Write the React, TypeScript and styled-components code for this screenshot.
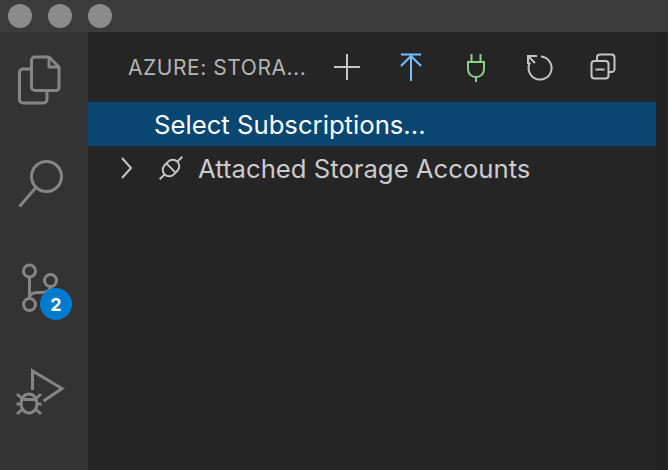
import React from "react";
import styled, { createGlobalStyle } from "styled-components";

const GlobalStyle = createGlobalStyle`
  html, body {
    margin: 0;
    padding: 0;
    background: #252526;
  }
`;

const Window = styled.div`
  width: 668px;
  height: 470px;
  display: flex;
  flex-direction: column;
  overflow: hidden;
  font-family: Inter, "Liberation Sans", sans-serif;
`;

const TitleBar = styled.div`
  height: 32px;
  flex: none;
  display: flex;
  align-items: center;
  gap: 16px;
  padding-left: 8px;
  background: #3c3c3c;
`;

const TrafficLight = styled.span`
  width: 24px;
  height: 24px;
  border-radius: 50%;
  background: #8b8b8b;
`;

const Body = styled.div`
  flex: 1;
  display: flex;
  min-height: 0;
`;

const ActivityBar = styled.div`
  width: 88px;
  flex: none;
  display: flex;
  flex-direction: column;
  background: #333333;
`;

const ActivityItem = styled.div`
  position: relative;
  height: 108px;
  flex: none;
  svg {
    display: block;
  }
`;

const Badge = styled.span`
  position: absolute;
  left: 40px;
  top: 40px;
  width: 32px;
  height: 32px;
  border-radius: 50%;
  background: #007acc;
  color: #fff;
  font-size: 18px;
  font-weight: 700;
  display: flex;
  align-items: center;
  justify-content: center;
`;

const SideBar = styled.div`
  flex: 1;
  display: flex;
  flex-direction: column;
  background: #252526;
`;

const Gutter = styled.div`
  width: 10px;
  flex: none;
  background: #222223;
  border-right: 2px solid #252526;
`;

const Header = styled.div`
  height: 70px;
  flex: none;
  display: flex;
  align-items: center;
  padding-left: 40px;
`;

const HeaderTitle = styled.div`
  width: 199px;
  flex: none;
  font-size: 21px;
  letter-spacing: 0.55px;
  color: #b4b4b4;
  white-space: nowrap;
`;

const Actions = styled.div`
  display: flex;
  align-items: center;
  gap: 24px;
  svg {
    display: block;
    flex: none;
  }
`;

const Row = styled.div<{ $selected?: boolean }>`
  height: 44px;
  flex: none;
  display: flex;
  align-items: center;
  font-size: 25.7px;
  white-space: nowrap;
  background: ${({ $selected }) => ($selected ? "#094771" : "transparent")};
  color: ${({ $selected }) => ($selected ? "#ffffff" : "#cccccc")};
`;

const SelectLabel = styled.span`
  padding-left: 66px;
`;

const TreeIcons = styled.span`
  display: flex;
  align-items: center;
  padding-left: 31px;
  gap: 23px;
  margin-right: 14px;
  svg {
    display: block;
    flex: none;
  }
`;

const gray = "#858585";

export default function App(): JSX.Element {
  return (
    <>
      <GlobalStyle />
      <Window>
        <TitleBar>
          <TrafficLight />
          <TrafficLight />
          <TrafficLight />
        </TitleBar>
        <Body>
          <ActivityBar>
            <ActivityItem>
              <svg width="88" height="108" viewBox="0 32 88 108" fill="none" stroke={gray} strokeWidth="3" strokeLinejoin="round">
                <path d="M31 69H23a3.500 3.500 0 0 0-3.500 3.500V99.500a3.500 3.500 0 0 0 3.500 3.500H43.500a3.500 3.500 0 0 0 3.500-3.500V91" />
                <path d="M35 57H49L59 67V87.500a3 3 0 0 1-3 3H35a3.500 3.500 0 0 1-3.500-3.500V60.500a3.500 3.500 0 0 1 3.500-3.500Z" />
                <path d="M49 57V67H59" />
              </svg>
            </ActivityItem>
            <ActivityItem>
              <svg width="88" height="108" viewBox="0 140 88 108" fill="none" stroke={gray} strokeWidth="3">
                <circle cx="46.500" cy="176.500" r="15" />
                <path d="M35.500 188L19.500 206.500" />
              </svg>
            </ActivityItem>
            <ActivityItem>
              <svg width="88" height="108" viewBox="0 248 88 108" fill="none" stroke={gray} strokeWidth="3">
                <circle cx="29.500" cy="271" r="6" />
                <circle cx="50.500" cy="280.500" r="6" />
                <circle cx="29.500" cy="304.500" r="6" />
                <path d="M29.500 277V298" />
                <path d="M50.500 286.500C50 292 46 292.500 38 292.500C33 292.500 29.500 294 29.500 298" />
              </svg>
              <Badge>2</Badge>
            </ActivityItem>
            <ActivityItem>
              <svg width="88" height="108" viewBox="0 356 88 108" fill="none" stroke={gray} strokeWidth="3">
                <path d="M32.500 390V371L62 388.500L43.500 401" />
                <ellipse cx="29" cy="403.500" rx="8" ry="9.500" />
                <path d="M21.500 399.500H36.500" />
                <path d="M17 394L22 398.500M41 394L36 398.500M16.500 404H21M41.500 404H37M17 414L22 409.500M41 414L36 409.500" />
              </svg>
            </ActivityItem>
          </ActivityBar>
          <SideBar>
            <Header>
              <HeaderTitle>AZURE: STORA...</HeaderTitle>
              <Actions>
                <svg width="40" height="40" viewBox="0 0 40 40" fill="none" stroke="#c5c5c5" strokeWidth="2">
                  <path d="M20 7V33M7 20H33" />
                </svg>
                <svg width="40" height="40" viewBox="0 0 40 40" fill="none" stroke="#75beff" strokeWidth="2">
                  <path d="M10 7.500H30M20 34V9M10 19L20 9L30 19" />
                </svg>
                <svg width="40" height="40" viewBox="0 0 40 40" fill="none" stroke="#89d185" strokeWidth="2">
                  <path d="M16.500 7V15M25.500 7V15M13 15H29V22C29 27 25.500 30 21 30C16.500 30 13 27 13 22V15ZM21 30V35" />
                </svg>
                <svg width="40" height="40" viewBox="0 0 40 40" fill="none" stroke="#c5c5c5" strokeWidth="2">
                  <path d="M22 9.600A11.500 11.500 0 1 1 11 15.500" />
                  <path d="M18 9H9V17M9 9L16 16" />
                </svg>
                <svg width="40" height="40" viewBox="0 0 40 40" fill="none" stroke="#c5c5c5" strokeWidth="2">
                  <path d="M14 14V10.500A3 3 0 0 1 17 7.500H28.500A3 3 0 0 1 31.500 10.500V22A3 3 0 0 1 28.500 25H25" />
                  <rect x="8.500" y="14" width="17" height="17.500" rx="3" />
                  <path d="M12.500 22.500H21.500" />
                </svg>
              </Actions>
            </Header>
            <Row $selected>
              <SelectLabel>Select Subscriptions...</SelectLabel>
            </Row>
            <Row>
              <TreeIcons>
                <svg width="16" height="24" viewBox="0 0 16 24" fill="none" stroke="#c5c5c5" strokeWidth="2">
                  <path d="M3 2L12 12L3 22" />
                </svg>
                <svg width="26" height="26" viewBox="0 0 26 26" fill="none" stroke="#c5c5c5" strokeWidth="2">
                  <g transform="rotate(-45 13 13)">
                    <rect x="4" y="6.500" width="18" height="13" rx="6.500" />
                    <path d="M13 6.500V19.500M-3 13H4M22 13H29" />
                  </g>
                </svg>
              </TreeIcons>
              <span>Attached Storage Accounts</span>
            </Row>
          </SideBar>
          <Gutter />
        </Body>
      </Window>
    </>
  );
}
